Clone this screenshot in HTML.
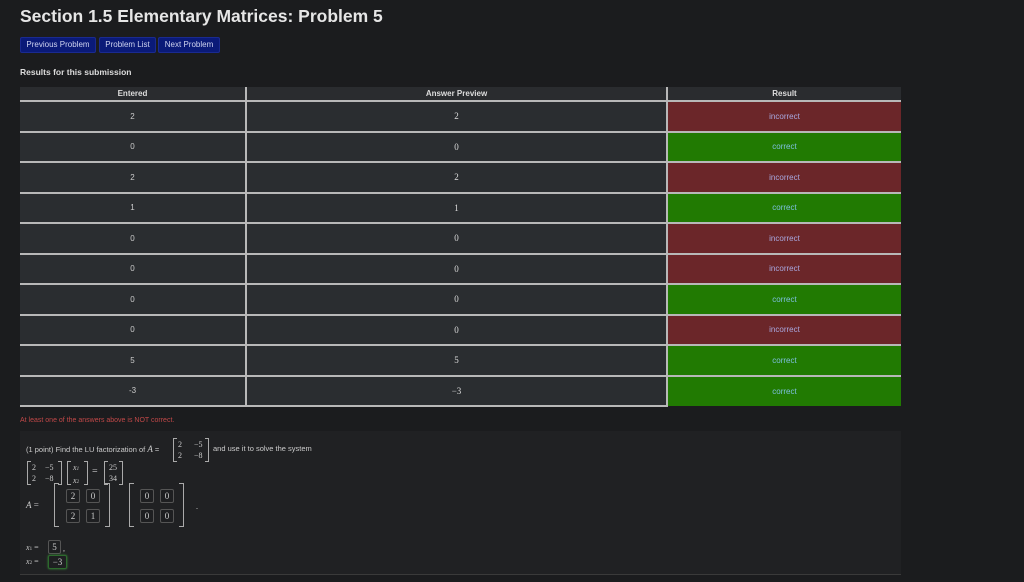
<!DOCTYPE html>
<html><head><meta charset="utf-8"><style>
*{margin:0;padding:0;box-sizing:border-box}
body{width:1024px;height:582px;background:#1b1c1e;font-family:"Liberation Sans",sans-serif;color:#ddd;position:relative;overflow:hidden}
.a{position:absolute}
h1{position:absolute;left:20px;top:6px;font-size:17.5px;font-weight:bold;color:#e6e6e6}
.btn{position:absolute;top:37px;height:16px;background:#0a1a78;border:1px solid #1a2a90;border-radius:2px;color:#cfd4f0;font-size:8px;line-height:14px;text-align:center}
.sub{left:20px;top:67px;font-size:8.5px;font-weight:bold;color:#ddd}
table{position:absolute;left:20px;top:87px;width:881px;border-collapse:collapse;font-size:8px}
th{height:14px;background:#2a2c2f;color:#ddd;font-weight:bold;border-bottom:2px solid #b8b8b8}
td{height:30.5px;background:#2a2d30;text-align:center;border-bottom:2px solid #b8b8b8;color:#ccc}
th+th,td+td{border-left:2px solid #b8b8b8}
td.p{font-family:"Liberation Serif",serif;font-size:9px;color:#ddd}
td.r{background:#6b2629;color:#a9a9e0;border-left:2px solid #b8b8b8}
td.g{background:#217a02;color:#7fc0e0;border-left:2px solid #b8b8b8}
.m{font-family:"Liberation Serif",serif;font-size:8px;color:#ccc}
.box{position:absolute;width:14px;height:14px;border:1px solid #555;border-radius:2px;background:#1e1f21;font-family:"Liberation Serif",serif;font-size:9px;text-align:center;line-height:12px;color:#ccc}
.br{position:absolute;border:1.5px solid #aaa}
.bl{border-right:none}.bri{border-left:none}
</style></head><body>
<h1>Section 1.5 Elementary Matrices: Problem 5</h1>
<div class="btn" style="left:20px;width:76px">Previous Problem</div>
<div class="btn" style="left:99px;width:57px">Problem List</div>
<div class="btn" style="left:158px;width:62px">Next Problem</div>
<div class="a sub">Results for this submission</div>
<table>
<tr><th style="width:226px">Entered</th><th style="width:421px">Answer Preview</th><th>Result</th></tr>
<tr><td>2</td><td class="p">2</td><td class="r">incorrect</td></tr>
<tr><td>0</td><td class="p">0</td><td class="g">correct</td></tr>
<tr><td>2</td><td class="p">2</td><td class="r">incorrect</td></tr>
<tr><td>1</td><td class="p">1</td><td class="g">correct</td></tr>
<tr><td>0</td><td class="p">0</td><td class="r">incorrect</td></tr>
<tr><td>0</td><td class="p">0</td><td class="r">incorrect</td></tr>
<tr><td>0</td><td class="p">0</td><td class="g">correct</td></tr>
<tr><td>0</td><td class="p">0</td><td class="r">incorrect</td></tr>
<tr><td>5</td><td class="p">5</td><td class="g">correct</td></tr>
<tr><td>-3</td><td class="p">&minus;3</td><td class="g" style="border-bottom:none">correct</td></tr>
</table>
<div class="a" style="left:20px;top:417px;font-size:7px;color:#c04848">At least one of the answers above is NOT correct.</div>
<div class="a" style="left:20px;top:431px;width:881px;height:144px;background:#202123;border-bottom:1px solid #3a3a3a"></div>
<div class="a" style="left:26px;top:444px;font-size:7.5px;color:#ccc">(1 point) Find the LU factorization of <i class="m" style="font-size:9px">A</i> =</div>
<div class="br bl" style="left:173px;top:438px;width:4px;height:24px"></div>
<div class="a m" style="left:178px;top:439px;line-height:11px">2<br>2</div>
<div class="a m" style="left:194px;top:439px;line-height:11px">&minus;5<br>&minus;8</div>
<div class="br bri" style="left:205px;top:438px;width:4px;height:24px"></div>
<div class="a" style="left:213px;top:444px;font-size:7.5px;color:#ccc">and use it to solve the system</div>
<div class="br bl" style="left:27px;top:461px;width:4px;height:24px"></div>
<div class="a m" style="left:32px;top:462px;line-height:11px">2<br>2</div>
<div class="a m" style="left:45px;top:462px;line-height:11px">&minus;5<br>&minus;8</div>
<div class="br bri" style="left:58px;top:461px;width:4px;height:24px"></div>
<div class="br bl" style="left:67px;top:461px;width:4px;height:24px"></div>
<div class="a m" style="left:73px;top:462px;line-height:11px;font-style:italic">x<span style="font-size:5px">1</span><br>x<span style="font-size:5px">2</span></div>
<div class="br bri" style="left:84px;top:461px;width:4px;height:24px"></div>
<div class="a m" style="left:92px;top:466px;font-size:10px">=</div>
<div class="br bl" style="left:104px;top:461px;width:4px;height:24px"></div>
<div class="a m" style="left:109px;top:462px;line-height:11px">25<br>34</div>
<div class="br bri" style="left:119px;top:461px;width:4px;height:24px"></div>
<div class="a m" style="left:26px;top:500px;font-size:9px"><i>A</i> =</div>
<div class="br bl" style="left:54px;top:483px;width:5px;height:44px"></div>
<div class="box" style="left:66px;top:489px">2</div><div class="box" style="left:86px;top:489px">0</div>
<div class="box" style="left:66px;top:509px">2</div><div class="box" style="left:86px;top:509px">1</div>
<div class="br bri" style="left:105px;top:483px;width:5px;height:44px"></div>
<div class="br bl" style="left:129px;top:483px;width:5px;height:44px"></div>
<div class="box" style="left:140px;top:489px">0</div><div class="box" style="left:160px;top:489px">0</div>
<div class="box" style="left:140px;top:509px">0</div><div class="box" style="left:160px;top:509px">0</div>
<div class="br bri" style="left:179px;top:483px;width:5px;height:44px"></div>
<div class="a m" style="left:196px;top:502px">.</div>
<div class="a m" style="left:26px;top:543px;font-size:8px"><i>x</i><span style="font-size:5px">1</span> =</div>
<div class="box" style="left:48px;top:540px;width:13px">5</div>
<div class="a m" style="left:63px;top:544px">,</div>
<div class="a m" style="left:26px;top:557px;font-size:8px"><i>x</i><span style="font-size:5px">2</span> =</div>
<div class="box" style="left:48px;top:555px;width:19px;border-color:#2d6a2d;box-shadow:0 0 2px #3a8a3a">&minus;3</div>
</body></html>
